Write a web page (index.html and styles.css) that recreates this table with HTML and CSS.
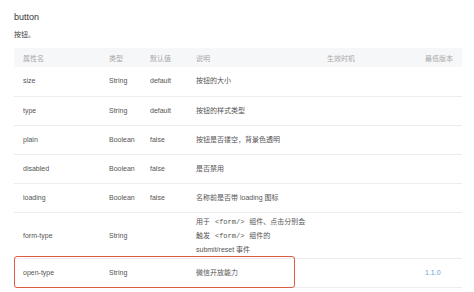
FILE: index.html
```html
<!DOCTYPE html>
<html lang="zh">
<head>
<meta charset="utf-8">
<link rel="stylesheet" href="styles.css">
</head>
<body>
<div class="page">
  <h2 class="title">button</h2>
  <p class="desc">按钮。</p>
  <div class="table-wrap">
    <table class="props">
      <colgroup>
        <col class="c1"><col class="c2"><col class="c3"><col class="c4"><col class="c5"><col class="c6">
      </colgroup>
      <thead>
        <tr><th>属性名</th><th>类型</th><th>默认值</th><th>说明</th><th>生效时机</th><th>最低版本</th></tr>
      </thead>
      <tbody>
        <tr><td>size</td><td>String</td><td>default</td><td>按钮的大小</td><td></td><td></td></tr>
        <tr><td>type</td><td>String</td><td>default</td><td>按钮的样式类型</td><td></td><td></td></tr>
        <tr><td>plain</td><td>Boolean</td><td>false</td><td>按钮是否镂空，背景色透明</td><td></td><td></td></tr>
        <tr><td>disabled</td><td>Boolean</td><td>false</td><td>是否禁用</td><td></td><td></td></tr>
        <tr><td>loading</td><td>Boolean</td><td>false</td><td>名称前是否带 loading 图标</td><td></td><td></td></tr>
        <tr class="multi"><td>form-type</td><td>String</td><td></td><td>用于 <code>&lt;form/&gt;</code> 组件、点击分别会<br>触发 <code>&lt;form/&gt;</code> 组件的<br>submit/reset 事件</td><td></td><td></td></tr>
        <tr><td>open-type</td><td>String</td><td></td><td>微信开放能力</td><td></td><td class="ver">1.1.0</td></tr>
      </tbody>
    </table>
    <div class="highlight"></div>
  </div>
</div>
</body>
</html>
```
FILE: styles.css
```css
html, body {
  margin: 0;
  padding: 0;
  background: #ffffff;
}
body {
  font-family: "Liberation Sans", Arial, "Noto Sans CJK SC", sans-serif;
  color: #555;
}
.page {
  padding: 11px 12px 0 14px;
}
.title {
  margin: 0;
  font-size: 9px;
  line-height: 12px;
  font-weight: normal;
  color: #333;
}
.desc {
  margin: 6px 0 0;
  font-size: 7px;
  line-height: 12px;
  color: #444;
}
.table-wrap {
  position: relative;
  margin-top: 7px;
  width: 448px;
}
.props {
  width: 448px;
  border-collapse: collapse;
  table-layout: fixed;
  font-size: 7px;
}
.c1 { width: 86px; }
.c2 { width: 41px; }
.c3 { width: 46px; }
.c4 { width: 131px; }
.c5 { width: 98px; }
.c6 { width: 46px; }
.props th {
  height: 19px;
  padding: 0 0 0 9px;
  background: #f6f7f9;
  color: #a8a8a8;
  font-weight: normal;
  text-align: left;
  white-space: nowrap;
  box-sizing: border-box;
}
.props td {
  height: 29px;
  padding: 0 0 0 9px;
  border-bottom: 1px solid #ededed;
  line-height: 14px;
  vertical-align: middle;
  white-space: nowrap;
  color: #555;
  box-sizing: border-box;
}
.props tr.multi td {
  height: 46px;
  padding-top: 1px;
}
.props code {
  font-family: "Liberation Mono", "DejaVu Sans Mono", monospace;
  font-size: 7px;
  padding: 0 3px;
}
.props td.ver {
  color: #6e9bd8;
}
.highlight {
  position: absolute;
  left: 0;
  top: 208px;
  width: 281px;
  height: 32px;
  border: 1.5px solid #df5a45;
  border-radius: 3px;
  box-sizing: border-box;
}
```
